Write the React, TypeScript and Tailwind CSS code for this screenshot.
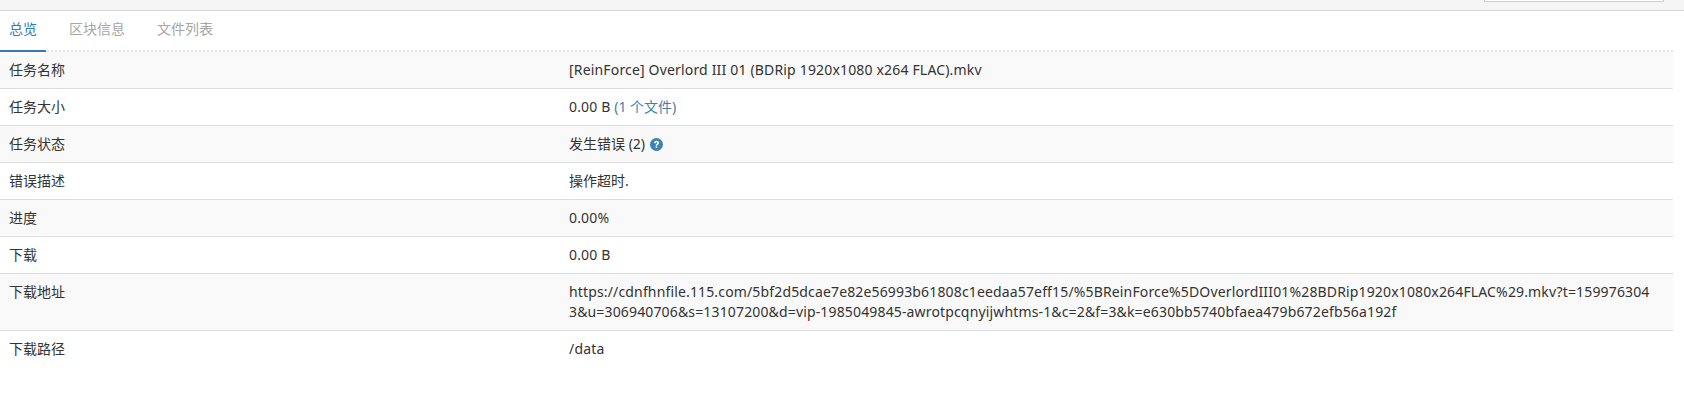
const latin = "tracking-[0.17px]";
const rows: { label: string; value: React.ReactNode }[] = [
  { label: "任务名称", value: <span className={latin}>[ReinForce] Overlord III 01 (BDRip 1920x1080 x264 FLAC).mkv</span> },
  {
    label: "任务大小",
    value: (
      <>
        <span className={latin}>0.00 B</span> <span className="text-[#4580ab]">(1 个文件)</span>
      </>
    ),
  },
  {
    label: "任务状态",
    value: (
      <span className="flex items-center gap-[5px]">
        发生错误 (2)
        <svg viewBox="0 0 24 24" className="w-[13px] h-[13px]">
          <circle cx="12" cy="12" r="12" fill="#3c82b4" />
          <path d="M7.500 9.500c0-2.700 2-4.300 4.600-4.300 2.600 0 4.500 1.500 4.500 3.800 0 3.300-3.300 3.200-3.300 5.400h-2.900c0-3.500 3.200-3.400 3.200-5.200 0-.8-.6-1.300-1.500-1.300-1 0-1.600.6-1.700 1.600z" fill="#fff" />
          <rect x="10.400" y="15.500" width="2.900" height="2.900" fill="#fff" />
        </svg>
      </span>
    ),
  },
  { label: "错误描述", value: "操作超时." },
  { label: "进度", value: <span className={latin}>0.00%</span> },
  { label: "下载", value: <span className={latin}>0.00 B</span> },
  {
    label: "下载地址",
    value: (
      <span className="tracking-[0.15px]">
        https://cdnfhnfile.115.com/5bf2d5dcae7e82e56993b61808c1eedaa57eff15/%5BReinForce%5DOverlordIII01%28BDRip1920x1080x264FLAC%29.mkv?t=1599763043&u=306940706&s=13107200&d=vip-1985049845-awrotpcqnyijwhtms-1&c=2&f=3&k=e630bb5740bfaea479b672efb56a192f
      </span>
    ),
  },
  { label: "下载路径", value: <span className={latin}>/data</span> },
];

export default function App() {
  return (
    <div className="min-h-[407px] bg-white text-[14px] leading-5 text-[#333] font-['Noto_Sans','Noto_Sans_CJK_SC',sans-serif]">
      <div className="relative h-[11px] bg-[#f5f5f5] border-b border-[#d9d9d9]">
        <div className="absolute top-[-10px] right-[20px] w-[180px] h-[12px] bg-white border border-[#cfcfcf]" />
      </div>
      <div className="mr-[11px]">
        <div className="flex h-[41px] border-b-2 border-dotted border-[#e5e5e5]">
          <div className="h-[41px] px-[9px] pt-[8px] text-[#337ab7] border-b-2 border-[#337ab7]">总览</div>
          <div className="h-[39px] ml-[14px] px-[9px] pt-[8px] text-[#a6a6a6]">区块信息</div>
          <div className="h-[39px] ml-[14px] px-[9px] pt-[8px] text-[#a6a6a6]">文件列表</div>
        </div>
        {rows.map((r, i) => (
          <div
            key={r.label}
            className={`flex py-[8px] ${i % 2 === 0 ? "bg-[#f9f9f9]" : "bg-white"} ${i < rows.length - 1 ? "border-b border-[#dddddd]" : ""}`}
          >
            <div className="w-[569px] shrink-0 pl-[9px]">{r.label}</div>
            <div className="flex-1 min-w-0 pr-[17px] break-all">{r.value}</div>
          </div>
        ))}
      </div>
    </div>
  );
}
